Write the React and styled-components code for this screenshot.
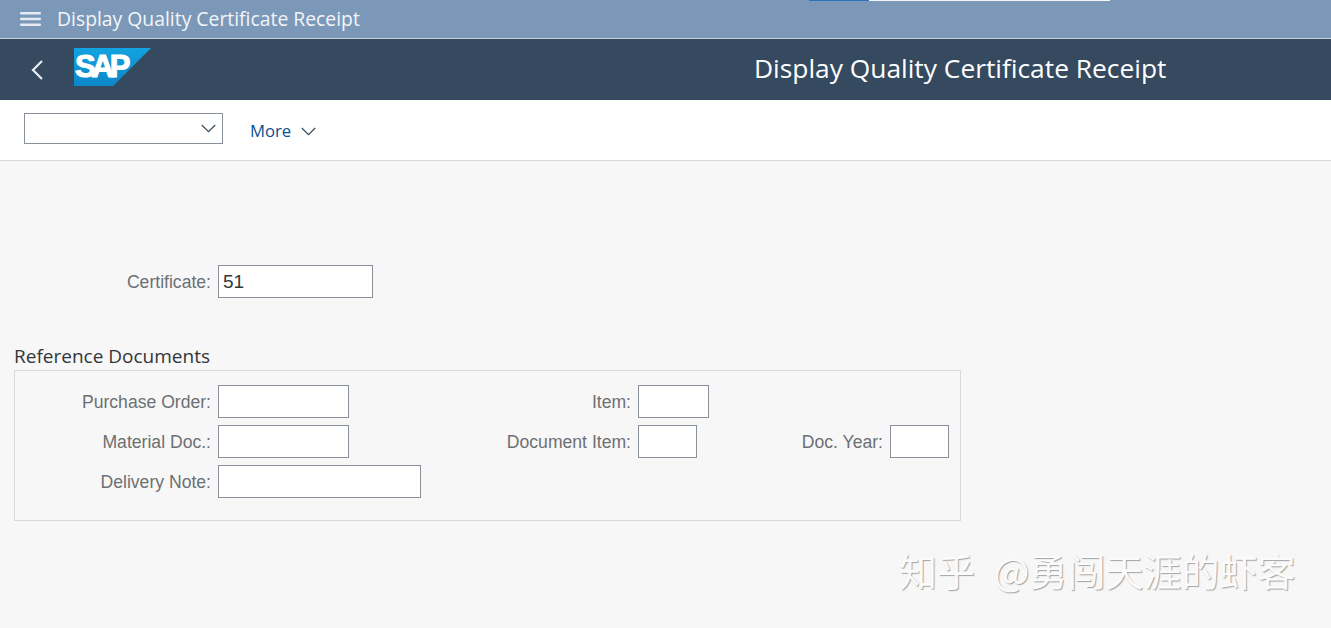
import React from "react";
import styled, { createGlobalStyle } from "styled-components";

const Global = createGlobalStyle`
  html, body { margin: 0; padding: 0; background: #f7f7f7; }
  body { font-family: "Liberation Sans", Arial, sans-serif; }
  * { box-sizing: border-box; }
`;
const Page = styled.div`
  position: relative;
  width: 1331px;
  height: 628px;
  overflow: hidden;
  background: #f7f7f7;
`;
const Progress = styled.div`
  position: absolute;
  top: 0;
  left: 809px;
  width: 301px;
  height: 1px;
  background: linear-gradient(to right, #2b73b6 60px, #f2f5f8 60px);
`;
const TopBar = styled.header`
  height: 39px;
  display: flex;
  align-items: center;
  gap: 16px;
  padding: 0 0 0 20px;
  background: #7c98b8;
  border-bottom: 1px solid #c5d1df;
`;
const ShellTitle = styled.div`
  font-family: "Open Sans", sans-serif;
  font-size: 19.35px;
  line-height: 36px;
  margin-top: -1px;
  color: #f2f5f8;
  white-space: nowrap;
`;
const TitleBar = styled.div`
  height: 61px;
  display: flex;
  align-items: center;
  background: #354a5f;
  padding-left: 31px;
`;
const Logo = styled.svg`
  display: block;
  margin-left: 29px;
  margin-top: -5px;
`;
const AppTitle = styled.h1`
  position: absolute;
  left: 754px;
  top: 50px;
  margin: 0;
  font-family: "Open Sans", sans-serif;
  font-weight: 400;
  font-size: 26.35px;
  line-height: 36px;
  color: #fff;
  white-space: nowrap;
`;
const Toolbar = styled.div`
  height: 61px;
  display: flex;
  align-items: center;
  padding: 0 0 0 24px;
  background: #fff;
  border-bottom: 1px solid #d9d9d9;
`;
const Select = styled.div`
  width: 199px;
  height: 31px;
  margin-top: -3px;
  display: flex;
  align-items: center;
  justify-content: flex-end;
  padding-right: 6px;
  background: #fff;
  border: 1px solid #89919a;
`;
const More = styled.div`
  display: flex;
  align-items: center;
  gap: 10px;
  margin-left: 27px;
  color: #0a4f91;
  font-family: "Open Sans", sans-serif;
  font-size: 16.7px;
`;
const MoreIcon = styled.span`
  display: flex;
  margin-top: 3px;
`;
const Content = styled.main`
  padding: 104px 0 0 14px;
`;
const CertRow = styled.div`
  display: grid;
  grid-template-columns: 197px 155px;
  column-gap: 7px;
  align-items: center;
`;
const Label = styled.label`
  text-align: right;
  font-size: 17.6px;
  line-height: 22px;
  padding-top: 1px;
  color: #6d7073;
  white-space: nowrap;
`;
const Field = styled.div`
  width: ${(p) => p.$w}px;
  height: 33px;
  padding: 1px 4px 0;
  display: flex;
  align-items: center;
  background: #fff;
  border: 1px solid #89919a;
  font-size: 19px;
  color: #32363a;
`;
const Legend = styled.div`
  margin-top: 48px;
  height: 24px;
  line-height: 20px;
  font-family: "Open Sans", sans-serif;
  font-size: 19px;
  color: #32363a;
`;
const Group = styled.section`
  width: 947px;
  height: 151px;
  padding: 14px 11px 0 0;
  border: 1px solid #d9d9d9;
  display: grid;
  grid-template-columns: 196px 203px 203px 138px 100px 59px;
  grid-auto-rows: 33px;
  column-gap: 7px;
  row-gap: 7px;
  align-items: center;
`;
const Spacer = styled.div`
  grid-column: span ${(p) => p.$n};
`;
const Watermark = styled.div`
  position: absolute;
  left: 899px;
  top: 546px;
  font-family: "Noto Sans CJK SC", sans-serif;
  font-size: 38px;
  word-spacing: 10px;
  line-height: 48px;
  white-space: nowrap;
  color: #fbfbfb;
  text-shadow: 1px 1px 1px #a3a3a3;
`;

const Chevron = ({ size = 15, color = "#354a5f" }) => (
  <svg width={size} height={size * 0.6} viewBox="0 0 15 9" fill="none">
    <path d="M0.8 1 L7.5 7.7 L14.2 1" stroke={color} strokeWidth="1.2" />
  </svg>
);

export default function App() {
  return (
    <Page>
      <Global />
      <TopBar>
        <svg width="21" height="14" viewBox="0 0 21 14">
          <g fill="#e4ebf3">
            <rect x="0" y="0" width="21" height="2.6" rx="1" />
            <rect x="0" y="5.7" width="21" height="2.6" rx="1" />
            <rect x="0" y="11.4" width="21" height="2.6" rx="1" />
          </g>
        </svg>
        <ShellTitle>Display Quality Certificate Receipt</ShellTitle>
      </TopBar>
      <Progress />
      <TitleBar>
        <svg width="14" height="20" viewBox="0 0 14 20" fill="none">
          <path d="M11 1 L2 10 L11 19" stroke="#e8edf3" strokeWidth="2.2" />
        </svg>
        <Logo width="77" height="38" viewBox="0 0 77 38">
          <defs>
            <linearGradient id="sapBlue" x1="0" y1="0" x2="0" y2="1">
              <stop offset="0" stopColor="#12a3e0" />
              <stop offset="1" stopColor="#0d87c9" />
            </linearGradient>
          </defs>
          <polygon points="0,0 77,0 39,38 0,38" fill="url(#sapBlue)" />
          <text
            x="1"
            y="29"
            fontFamily="Liberation Sans, sans-serif"
            fontWeight="700"
            fontSize="31"
            letterSpacing="-4.2"
            fill="#fff"
            stroke="#fff"
            strokeWidth="1.1"
          >
            SAP
          </text>
        </Logo>
      </TitleBar>
      <AppTitle>Display Quality Certificate Receipt</AppTitle>
      <Toolbar>
        <Select>
          <Chevron />
        </Select>
        <More>
          More
          <MoreIcon>
            <Chevron />
          </MoreIcon>
        </More>
      </Toolbar>
      <Content>
        <CertRow>
          <Label>Certificate:</Label>
          <Field $w={155}>51</Field>
        </CertRow>
        <Legend>Reference Documents</Legend>
        <Group>
          <Label>Purchase Order:</Label>
          <Field $w={131} />
          <Label>Item:</Label>
          <Field $w={71} />
          <Spacer $n={2} />
          <Label>Material Doc.:</Label>
          <Field $w={131} />
          <Label>Document Item:</Label>
          <Field $w={59} />
          <Label>Doc. Year:</Label>
          <Field $w={59} />
          <Label>Delivery Note:</Label>
          <Field $w={203} />
        </Group>
      </Content>
      <Watermark>知乎 @勇闯天涯的虾客</Watermark>
    </Page>
  );
}
